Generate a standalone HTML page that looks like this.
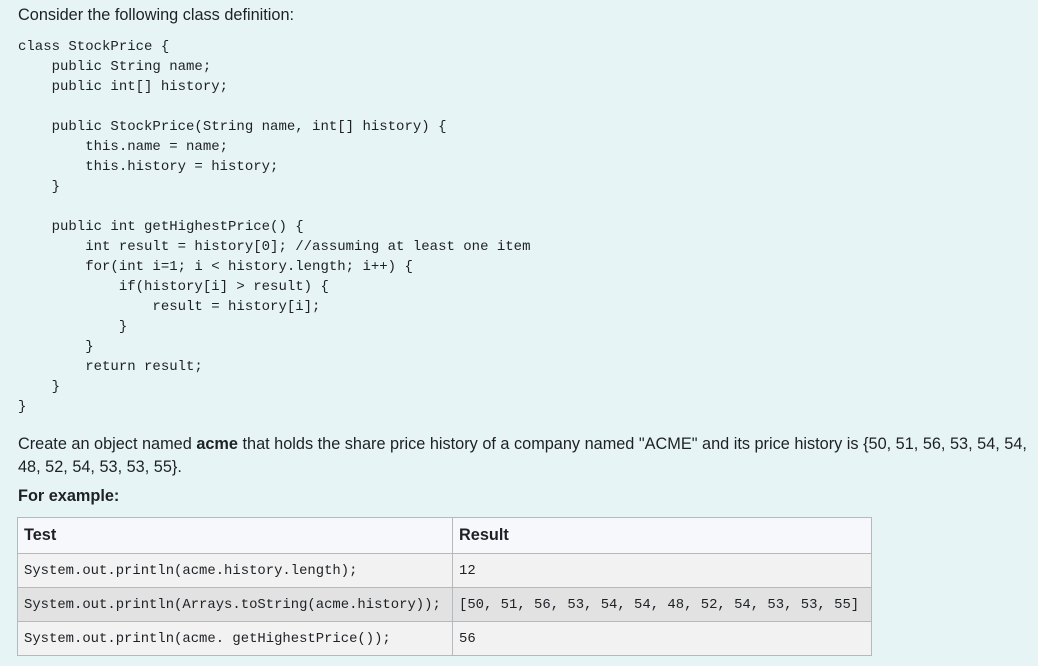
<!DOCTYPE html>
<html><head><meta charset="utf-8"><style>
body{margin:0;width:1038px;height:666px;background:#e7f4f6;font-family:"Liberation Sans",sans-serif;color:#1d2125;position:relative;overflow:hidden}
.a{position:absolute;white-space:pre}
.s{font-size:16.3px}
.c{font-family:"Liberation Mono",monospace;font-size:14px;color:#1d2125}
table{position:absolute;left:17px;top:517px;border-collapse:collapse;width:855px;table-layout:fixed}
td,th{border:1px solid #b5b9bc;padding:0 6px;text-align:left;height:33px;font-family:"Liberation Mono",monospace;font-size:13.9px;white-space:pre;overflow:hidden}
th{font-family:"Liberation Sans",sans-serif;font-size:16.3px;font-weight:bold;background:#f7f8fb;height:35px}
tr.o td{background:#f2f2f2}
tr.e td{background:#e2e2e2}
</style></head><body>
<div class="a s" style="left:18px;top:6px">Consider the following class definition:</div>
<div class="a c" style="left:18px;top:37px;line-height:20px">class StockPrice {
    public String name;
    public int[] history;

    public StockPrice(String name, int[] history) {
        this.name = name;
        this.history = history;
    }

    public int getHighestPrice() {
        int result = history[0]; //assuming at least one item
        for(int i=1; i &lt; history.length; i++) {
            if(history[i] &gt; result) {
                result = history[i];
            }
        }
        return result;
    }
}</div>
<div class="a s" style="left:18px;top:433px;line-height:23px">Create an object named <b>acme</b> that holds the share price history of a company named "ACME" and its price history is {50, 51, 56, 53, 54, 54,
48, 52, 54, 53, 53, 55}.</div>
<div class="a s" style="left:18px;top:487px;font-weight:bold">For example:</div>
<table>
<colgroup><col style="width:435px"><col></colgroup>
<tr><th>Test</th><th>Result</th></tr>
<tr class="o"><td>System.out.println(acme.history.length);</td><td>12</td></tr>
<tr class="e"><td>System.out.println(Arrays.toString(acme.history));</td><td>[50, 51, 56, 53, 54, 54, 48, 52, 54, 53, 53, 55]</td></tr>
<tr class="o"><td>System.out.println(acme. getHighestPrice());</td><td>56</td></tr>
</table>
</body></html>
